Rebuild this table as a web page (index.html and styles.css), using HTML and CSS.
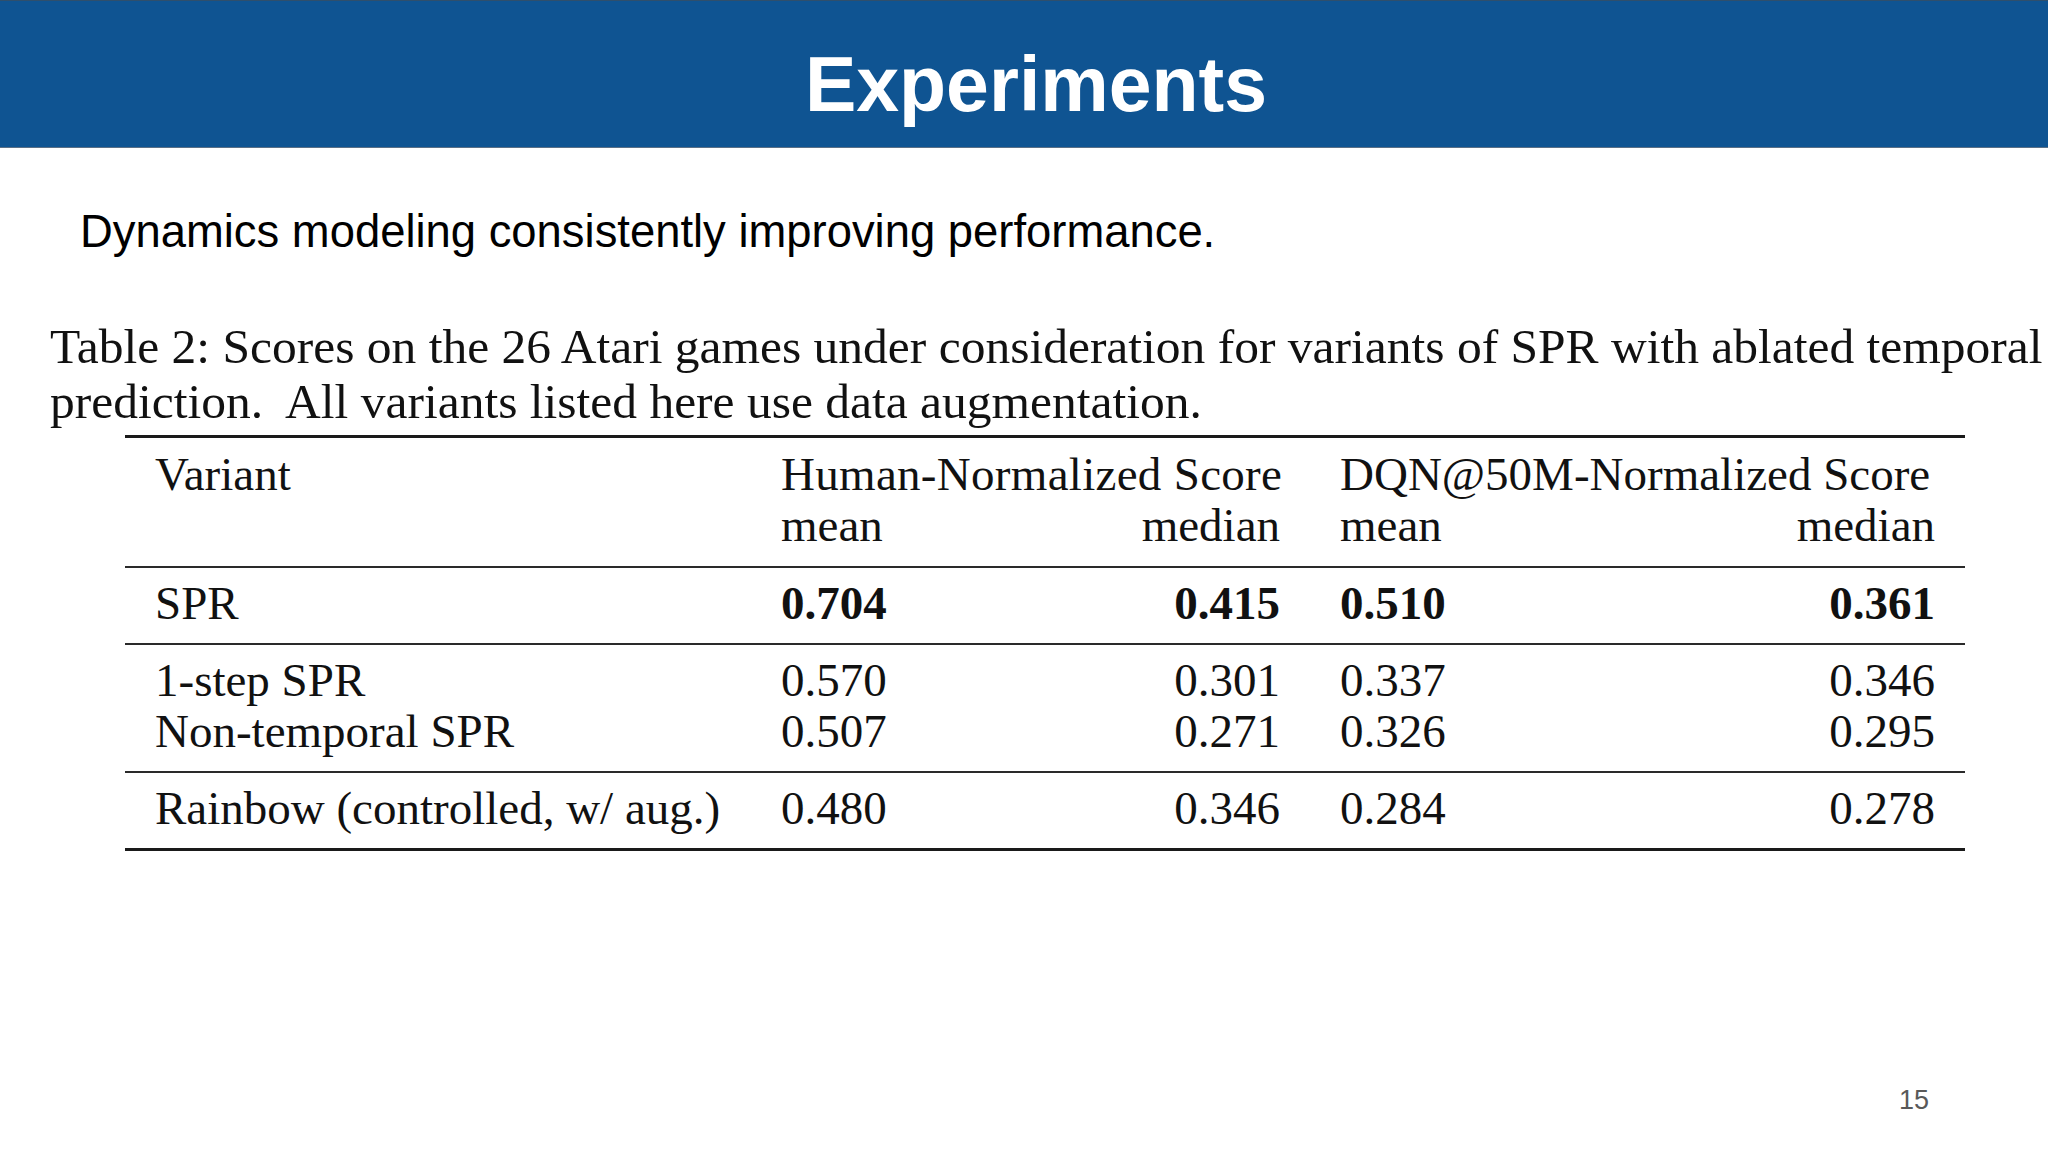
FILE: index.html
```html
<!DOCTYPE html>
<html lang="en">
<head>
<meta charset="utf-8">
<title>Experiments</title>
<link rel="stylesheet" href="styles.css">
</head>
<body>
<div class="slide">
  <header class="title-bar">
    <h1 class="title">Experiments</h1>
  </header>
  <main class="content">
    <p class="lead">Dynamics modeling consistently improving performance.</p>
    <figure class="table-fig">
      <p class="caption">Table 2: Scores on the 26 Atari games under consideration for variants of SPR with ablated temporal<br>prediction.&nbsp; All variants listed here use data augmentation.</p>
      <table class="scores">
        <colgroup>
          <col class="c-variant">
          <col class="c-h-mean">
          <col class="c-h-median">
          <col class="c-d-mean">
          <col class="c-d-median">
        </colgroup>
        <thead>
          <tr class="head-top">
            <th class="left">Variant</th>
            <th class="left group" colspan="2">Human-Normalized Score</th>
            <th class="left" colspan="2">DQN@50M-Normalized Score</th>
          </tr>
          <tr class="end">
            <th></th>
            <th class="left">mean</th>
            <th class="right">median</th>
            <th class="left">mean</th>
            <th class="right">median</th>
          </tr>
        </thead>
        <tbody>
          <tr class="start end bold">
            <td class="left">SPR</td>
            <td class="left">0.704</td>
            <td class="right">0.415</td>
            <td class="left">0.510</td>
            <td class="right">0.361</td>
          </tr>
          <tr class="start">
            <td class="left">1-step SPR</td>
            <td class="left">0.570</td>
            <td class="right">0.301</td>
            <td class="left">0.337</td>
            <td class="right">0.346</td>
          </tr>
          <tr class="end">
            <td class="left">Non-temporal SPR</td>
            <td class="left">0.507</td>
            <td class="right">0.271</td>
            <td class="left">0.326</td>
            <td class="right">0.295</td>
          </tr>
          <tr class="start end last">
            <td class="left">Rainbow (controlled, w/ aug.)</td>
            <td class="left">0.480</td>
            <td class="right">0.346</td>
            <td class="left">0.284</td>
            <td class="right">0.278</td>
          </tr>
        </tbody>
      </table>
    </figure>
  </main>
  <footer class="page-num">15</footer>
</div>
</body>
</html>
```
FILE: styles.css
```css
html, body {
  margin: 0;
  padding: 0;
  background: #ffffff;
  overflow: hidden;
}

.slide {
  width: 2048px;
  height: 1152px;
  display: flex;
  flex-direction: column;
  background: #ffffff;
  overflow: hidden;
}

.title-bar {
  background: #0f5492;
  border-top: 1px solid #2f4f6c;
  border-bottom: 1px solid #5b7086;
  height: 146px;
  display: flex;
  justify-content: center;
  padding-left: 24px;
}

.title {
  margin: 0;
  padding-top: 40px;
  font-family: "Liberation Sans", Arial, sans-serif;
  font-weight: bold;
  font-size: 77px;
  line-height: 86px;
  color: #ffffff;
}

.content {
  display: flex;
  flex-direction: column;
}

.lead {
  margin: 58px 0 0 80px;
  font-family: "Liberation Sans", Arial, sans-serif;
  font-size: 45.4px;
  line-height: 52px;
  color: #000000;
}

.table-fig {
  margin: 62px 0 0 0;
  padding: 0;
}

.caption {
  margin: 0 0 0 50px;
  font-family: "Liberation Serif", "Times New Roman", serif;
  font-size: 49.5px;
  line-height: 54.7px;
  color: #111111;
  white-space: nowrap;
}

.scores {
  margin: 5.6px 0 0 125px;
  width: 1840px;
  table-layout: fixed;
  border-collapse: separate;
  border-spacing: 0;
  font-family: "Liberation Serif", "Times New Roman", serif;
  font-size: 47px;
  line-height: 51px;
  color: #111111;
}

.c-variant { width: 626px; }
.c-h-mean { width: 280px; }
.c-h-median { width: 279px; }
.c-d-mean { width: 328px; }
.c-d-median { width: 327px; }

.scores th,
.scores td {
  padding: 0 30px;
  font-weight: normal;
  white-space: nowrap;
  vertical-align: baseline;
}

.scores .left { text-align: left; }
.scores .right { text-align: right; }

.scores .group {
  letter-spacing: 0.3px;
}

.scores .head-top th {
  border-top: 3px solid #1a1a1a;
  padding-top: 11px;
}

.scores thead .end th {
  padding-bottom: 15px;
  border-bottom: 2px solid #2a2a2a;
}

.scores tbody .start td {
  padding-top: 10px;
}

.scores tbody .end td {
  padding-bottom: 14px;
  border-bottom: 2px solid #2a2a2a;
}

.scores tbody .last td {
  border-bottom: 3px solid #1a1a1a;
}

.scores .bold td {
  font-weight: bold;
}

.scores .bold td:first-child {
  font-weight: normal;
}

.page-num {
  margin-top: auto;
  align-self: flex-end;
  padding: 0 119px 37px 0;
  font-family: "Liberation Sans", Arial, sans-serif;
  font-size: 27px;
  line-height: 30px;
  color: #595959;
}
```
